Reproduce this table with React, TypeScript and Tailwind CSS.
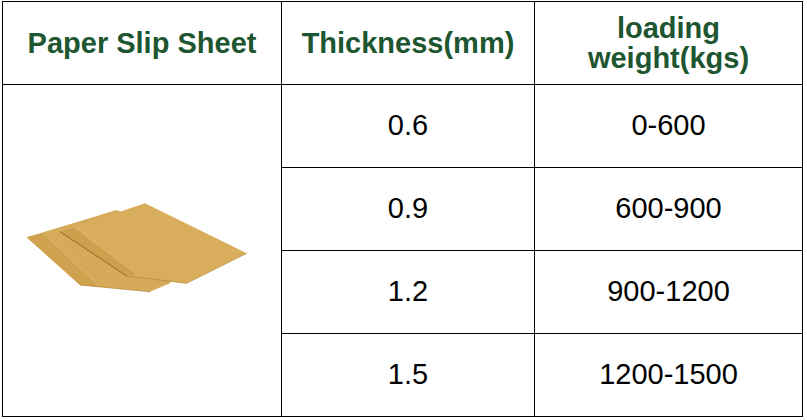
import React from "react";

// Paper slip sheet spec table — 3 cols, image cell spans the 4 data rows.

const ROWS: ReadonlyArray<{ thickness: string; weight: string }> = [
  { thickness: "0.6", weight: "0-600" },
  { thickness: "0.9", weight: "600-900" },
  { thickness: "1.2", weight: "900-1200" },
  { thickness: "1.5", weight: "1200-1500" },
];

/** Two stacked kraft slip sheets, drawn in the page's own pixel coords. */
function SlipSheets() {
  return (
    <svg
      viewBox="3 85 278 331"
      className="block h-full w-full"
      preserveAspectRatio="none"
      aria-label="Paper slip sheet"
    >
      {/* back sheet */}
      <polygon
        points="26.7,237.3 116.7,210 173.3,236.7 170,283.3 150,291.7 80,285"
        fill="#d5aa58"
      />
      <polygon
        points="26.7,237.3 43.3,233.3 100,286.7 80,285"
        fill="#cfa250"
      />
      <line x1="43.3" y1="233.3" x2="100" y2="286.7" stroke="#e4c27a" strokeWidth="0.8" />
      <line x1="80" y1="285" x2="150" y2="291.7" stroke="#b98c3c" strokeWidth="0.8" />
      {/* front sheet */}
      <polygon
        points="60,231.7 145,203.3 246.7,253.3 186.7,283.3 126.7,276"
        fill="#d8ae5c"
      />
      <polygon
        points="60,231.7 75,227.3 136.7,274 126.7,276"
        fill="#cda04e"
      />
      <line x1="75" y1="227.3" x2="136.7" y2="274" stroke="#e6c47c" strokeWidth="0.8" />
      <line x1="60" y1="231.7" x2="126.7" y2="276" stroke="#8f6a2a" strokeWidth="1" />
      <line x1="140" y1="272" x2="241" y2="250" stroke="#e2bf76" strokeWidth="0.6" opacity="0.7" />
      <line x1="126.7" y1="276" x2="186.7" y2="283.3" stroke="#b88b3b" strokeWidth="0.8" />
      <line x1="186.7" y1="283.3" x2="246.7" y2="253.3" stroke="#c4974a" strokeWidth="0.8" />
    </svg>
  );
}

export default function App() {
  const head =
    "flex items-center justify-center border-r border-b border-black text-center text-[29px] font-bold leading-[30px] text-[#1e5631]";
  const cell =
    "flex items-center justify-center border-r border-b border-black text-[29px] text-black";

  return (
    <div
      className="min-h-screen bg-white pt-[1px] pl-[2px]"
      style={{ fontFamily: '"Liberation Sans", Arial, sans-serif' }}
    >
      <div className="grid w-[801px] grid-cols-[279px_253px_268px] grid-rows-[83px_83px_83px_83px_83px] border-l border-t border-black">
        <div className={head}>Paper Slip Sheet</div>
        <div className={head}>Thickness(mm)</div>
        <div className={head}>
          loading
          <br />
          weight(kgs)
        </div>

        <div className="row-span-4 border-r border-b border-black">
          <SlipSheets />
        </div>

        {ROWS.map((r) => (
          <React.Fragment key={r.thickness}>
            <div className={`${cell} col-start-2`}>{r.thickness}</div>
            <div className={cell}>{r.weight}</div>
          </React.Fragment>
        ))}
      </div>
    </div>
  );
}
